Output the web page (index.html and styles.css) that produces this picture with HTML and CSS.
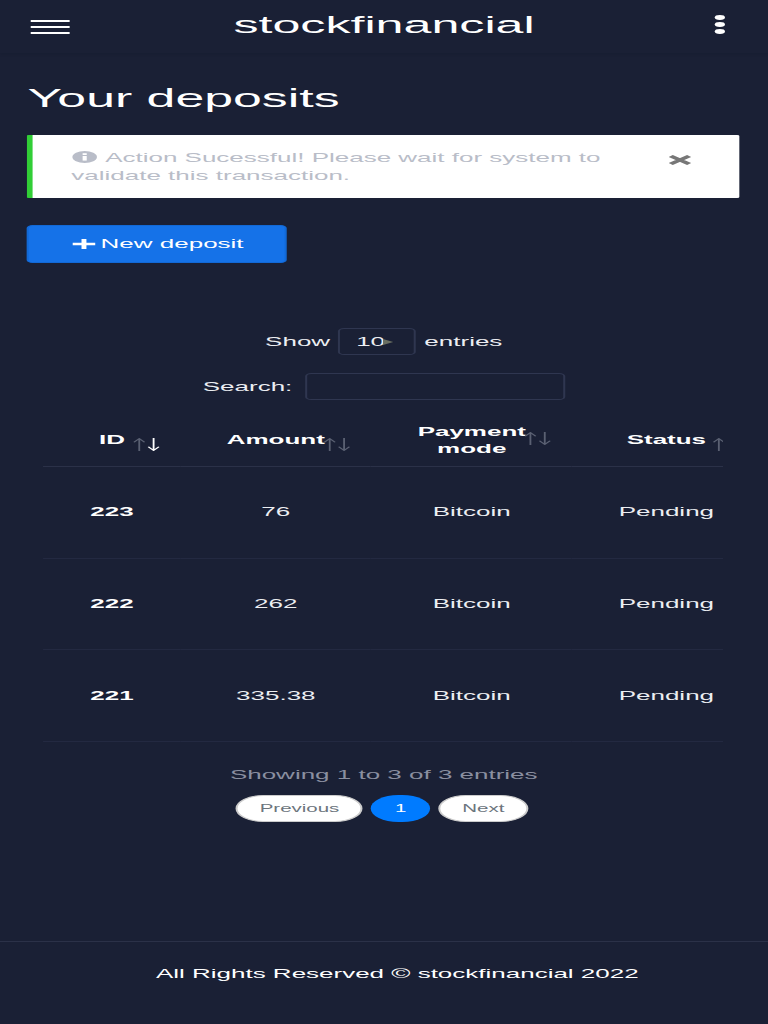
FILE: index.html
```html
<!DOCTYPE html>
<html lang="en">
<head>
<meta charset="utf-8">
<title>Your deposits - stockfinancial</title>
<link rel="stylesheet" href="styles.css">
</head>
<body>
<div class="page">
  <header class="topbar">
    <div class="burger"><span></span><span></span><span></span></div>
    <div class="brand">stockfinancial</div>
    <div class="dots"><span></span><span></span><span></span></div>
  </header>
  <main class="content">
    <h1 class="title">Your deposits</h1>
    <div class="alert">
      <p class="alert-text"><svg class="info" viewBox="0 0 12 12"><circle cx="6" cy="6" r="6" fill="#b9bdc8"/><rect x="5" y="2.2" width="2" height="1.8" fill="#fff"/><rect x="5" y="5" width="2" height="4.6" fill="#fff"/></svg> Action Sucessful! Please wait for system to validate this transaction.</p>
      <svg class="close" viewBox="0 0 12 12"><path d="M1.5 2 10.5 10M10.5 2 1.5 10" stroke="#777" stroke-width="3" fill="none"/></svg>
    </div>
    <button class="new-btn"><svg class="plus" viewBox="0 0 12 12"><path d="M6 1v10M0.5 6h11" stroke="#fff" stroke-width="2.4" fill="none"/></svg>New deposit</button>
    <div class="dt-length">Show <span class="select">10</span> entries</div>
    <div class="dt-search"><label for="q">Search:</label> <input id="q" class="search" type="text"></div>
    <div class="table-wrap">
      <table class="table">
        <colgroup><col class="c1"><col class="c2"><col class="c3"><col class="c4"></colgroup>
        <thead>
          <tr>
            <th><span class="th-in">ID<span class="sort s-id"><svg class="arr dim" viewBox="0 0 6 13"><path d="M3 .6V13M.4 4.2 3 .6 5.6 4.2"/></svg><svg class="arr" viewBox="0 0 6 13"><path d="M3 0V12.4M.4 8.8 3 12.4 5.6 8.8"/></svg></span></span></th>
            <th><span class="th-in">Amount<span class="sort s-amt"><svg class="arr dim" viewBox="0 0 6 13"><path d="M3 .6V13M.4 4.2 3 .6 5.6 4.2"/></svg><svg class="arr dim" viewBox="0 0 6 13"><path d="M3 0V12.4M.4 8.8 3 12.4 5.6 8.8"/></svg></span></span></th>
            <th><span class="th-in">Payment<br>mode<span class="sort s-pay"><svg class="arr dim" viewBox="0 0 6 13"><path d="M3 .6V13M.4 4.2 3 .6 5.6 4.2"/></svg><svg class="arr dim" viewBox="0 0 6 13"><path d="M3 0V12.4M.4 8.8 3 12.4 5.6 8.8"/></svg></span></span></th>
            <th><span class="th-in">Status<span class="sort s-st"><svg class="arr dim" viewBox="0 0 6 13"><path d="M3 .6V13M.4 4.2 3 .6 5.6 4.2"/></svg></span></span></th>
          </tr>
        </thead>
        <tbody>
          <tr><td class="id">223</td><td>76</td><td>Bitcoin</td><td>Pending</td></tr>
          <tr><td class="id">222</td><td>262</td><td>Bitcoin</td><td>Pending</td></tr>
          <tr><td class="id">221</td><td>335.38</td><td>Bitcoin</td><td>Pending</td></tr>
        </tbody>
      </table>
    </div>
    <div class="dt-info">Showing 1 to 3 of 3 entries</div>
    <nav class="pager">
      <a class="pg pg-prev">Previous</a>
      <a class="pg pg-num">1</a>
      <a class="pg pg-next">Next</a>
    </nav>
  </main>
  <footer class="footer">All Rights Reserved © stockfinancial 2022</footer>
</div>
</body>
</html>
```
FILE: styles.css
```css
html, body { margin: 0; padding: 0; background: #1a2035; overflow: hidden; }
body { height: 1024px; }
.page {
  width: 375px; height: 1024px;
  display: flex; flex-direction: column;
  transform: scaleX(2.048); transform-origin: 0 0;
  font-family: "Liberation Sans", Arial, sans-serif;
  font-size: 12.7px; color: #fff;
}
.topbar {
  height: 53px; flex: none; box-sizing: border-box;
  padding-bottom: 4px;
  display: grid; grid-template-columns: 1fr auto 1fr; align-items: center;
  background: #1a2035; box-shadow: 0 1px 2px rgba(10,14,28,.15);
}
.burger { width: 19.6px; margin: 5px 0 0 14.6px; display: flex; flex-direction: column; gap: 4.7px; }
.burger span { display: block; height: 1.6px; background: #fff; }
.brand { font-size: 24.5px; line-height: 30px; }
.dots { width: 5.1px; justify-self: end; margin-right: 21px; display: flex; flex-direction: column; gap: 2px; }
.dots span { display: block; height: 5px; border-radius: 50%; background: #fff; }
.content { flex: 1; padding: 0 13.7px 0 13.45px; }
.title { margin: 30px 0 0; font-size: 25.3px; font-weight: 400; line-height: 30px; }
.alert {
  margin-top: 22px; height: 63px; box-sizing: border-box;
  background: #fff; border-left: 3.4px solid #31ce36; border-radius: 1px;
  padding: 14px 23.5px 0 18.4px;
  display: flex; justify-content: space-between; align-items: flex-start;
}
.alert-text { margin: 0; width: 262px; line-height: 18px; color: #b9bdc8; }
.info { width: 12.7px; height: 12px; vertical-align: -1px; margin-right: 1px; }
.close { width: 12px; height: 12px; margin-top: 5px; flex: none; }
.new-btn {
  margin-top: 27px; display: flex; align-items: center; justify-content: center; gap: 2.5px;
  width: 126.7px; height: 38px; padding: 0;
  background: #1572e8; border: 1px solid #1269d6; border-radius: 3px;
  color: #fff; font: inherit;
}
.plus { width: 12px; height: 12px; }
.dt-length { margin-top: 65px; height: 27px; display: flex; justify-content: center; align-items: center; gap: 4px; color: #eceef2; }
.select {
  width: 38px; height: 27px; box-sizing: border-box; border: 1px solid #2f3650; border-radius: 3px;
  display: flex; align-items: center; padding-left: 7.7px; position: relative;
}
.select::after {
  content: ""; position: absolute; left: 21px; top: 10px;
  border-left: 5px solid #6a6f62; border-top: 3.5px solid transparent; border-bottom: 3.5px solid transparent;
}
.dt-search { margin-top: 18px; height: 27px; display: flex; justify-content: center; align-items: center; gap: 6px; color: #eceef2; }
.search { width: 127px; height: 27px; box-sizing: border-box; padding: 0; background: transparent; border: 1px solid #2f3650; border-radius: 3px; }
.table-wrap { margin: 15px 8.3px 0 8.05px; overflow: hidden; }
.table { width: 350px; table-layout: fixed; border-collapse: collapse; }
.c1 { width: 66.4px; } .c2 { width: 93.6px; } .c3 { width: 97.8px; } .c4 { width: 92.2px; }
th { height: 51px; padding: 0; border-bottom: 1px solid #2b3148; font-weight: 700; line-height: 16.5px; text-align: center; vertical-align: middle; }
.th-in { position: relative; display: inline-block; }
.sort { position: absolute; left: 100%; top: 50%; margin-top: -2.5px; display: flex; gap: 1px; }
.s-id { margin-left: 3.5px; }
.s-st { margin-left: 3.3px; }
.s-amt { margin-left: -0.5px; }
.s-pay { margin-left: -1px; top: 0; margin-top: 8px; }
.arr { width: 6px; height: 13px; display: block; }
.arr path { fill: none; stroke: #fff; stroke-width: .9; }
.arr.dim path { stroke: #5a6072; }
td { height: 90.7px; padding: 0; border-bottom: 1px solid #232941; text-align: center; color: #eceef2; }
td.id { font-weight: 700; color: #fff; }
.dt-info { margin-top: 24px; text-align: center; color: #8a8fa0; line-height: 18px; }
.pager { margin: 11px 1.5px 0 0; display: flex; justify-content: center; gap: 3.9px; }
.pg { box-sizing: border-box; height: 27px; border-radius: 14px; font-size: 10px; display: flex; align-items: center; justify-content: center; }
.pg-prev { width: 62px; background: #fff; border: 1px solid #ccc; color: #6c757d; }
.pg-num { width: 29px; background: #007bff; color: #fff; }
.pg-next { width: 44px; background: #fff; border: 1px solid #ccc; color: #6c757d; }
.footer { flex: none; height: 83px; box-sizing: border-box; border-top: 1px solid #2b3148; padding: 23px 0 0 13px; text-align: center; line-height: 18px; }
```
